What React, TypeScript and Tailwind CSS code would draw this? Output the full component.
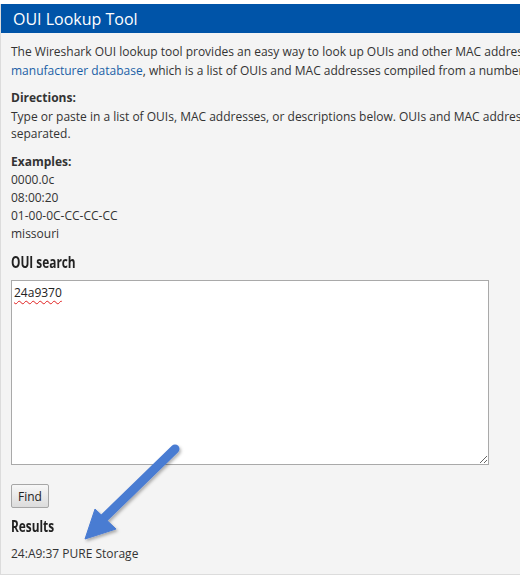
import React from 'react';

const body = { fontFamily: '"Open Sans", "DejaVu Sans", sans-serif' };

export default function App() {
  return (
    <div className="relative w-[520px] h-[588px] overflow-hidden bg-white text-[#333]" style={body}>
      <div className="mt-[4px] w-[640px] bg-[#f4f4f4] border-l border-b border-[#dcdcdc]">
        <div className="h-[29px] bg-[#0054a8] flex items-center pl-[12px]">
          <h1 className="text-white text-[16px] leading-none">OUI Lookup Tool</h1>
        </div>
        <div className="pl-[10px] pt-[9px] pb-[11px] text-[12px] leading-[19px] whitespace-nowrap">
          <p>
            The Wireshark OUI lookup tool provides an easy way to look up OUIs and other MAC addresses against the Wireshark
            <br />
            <a className="text-[#1a5fa6]">manufacturer database</a>, which is a list of OUIs and MAC addresses compiled from a number of sources.
          </p>
          <p className="mt-[9px] font-bold leading-[18px]">Directions:</p>
          <p className="mt-[1px] leading-[17px]">
            Type or paste in a list of OUIs, MAC addresses, or descriptions below. OUIs and MAC addresses may be colon, hyphen, or period
            <br />
            separated.
          </p>
          <p className="mt-[11px] font-bold leading-[18px]">Examples:</p>
          <div className="leading-[18px]">
            <div>0000.0c</div>
            <div>08:00:20</div>
            <div>01-00-0C-CC-CC-CC</div>
            <div>missouri</div>
          </div>
          <h2 className="mt-[8px] text-[16px] font-bold leading-[22px] text-[#222]">
            <span className="inline-block origin-left scale-x-[0.74]">OUI search</span>
          </h2>
          <div className="mt-[7px] w-[478px] h-[185px] bg-white border border-[#a9a9a9] resize overflow-auto px-[2px] pt-[4px] text-[12px] leading-[16px] text-[#222]">
            <span className="underline decoration-wavy decoration-[#e02020] underline-offset-[3px] decoration-[1px]">24a9370</span>
          </div>
          <button className="mt-[19px] h-[24px] px-[6px] text-[12px] text-[#222] rounded-[2px] border border-[#a6a6a6] bg-gradient-to-b from-[#f7f7f7] to-[#dcdcdc] align-top">Find</button>
          <h2 className="mt-[7px] text-[16px] font-bold leading-[22px] text-[#222]">
            <span className="inline-block origin-left scale-x-[0.74]">Results</span>
          </h2>
          <div className="mt-[8px] leading-[18px]">24:A9:37 PURE Storage</div>
        </div>
      </div>
      <svg className="absolute left-0 top-0 pointer-events-none" width="520" height="588" viewBox="0 0 520 588">
        <defs>
          <filter id="sh" x="-20%" y="-20%" width="140%" height="140%">
            <feDropShadow dx="1.5" dy="2" stdDeviation="1.5" floodColor="#000" floodOpacity="0.3" />
          </filter>
        </defs>
        <g filter="url(#sh)" fill="#4a7bd2" stroke="#4a7bd2">
          <line x1="175" y1="449" x2="104" y2="518" strokeWidth="9" strokeLinecap="round" />
          <polygon points="85,539 95,509 116,529" strokeWidth="1" strokeLinejoin="round" />
        </g>
      </svg>
    </div>
  );
}
